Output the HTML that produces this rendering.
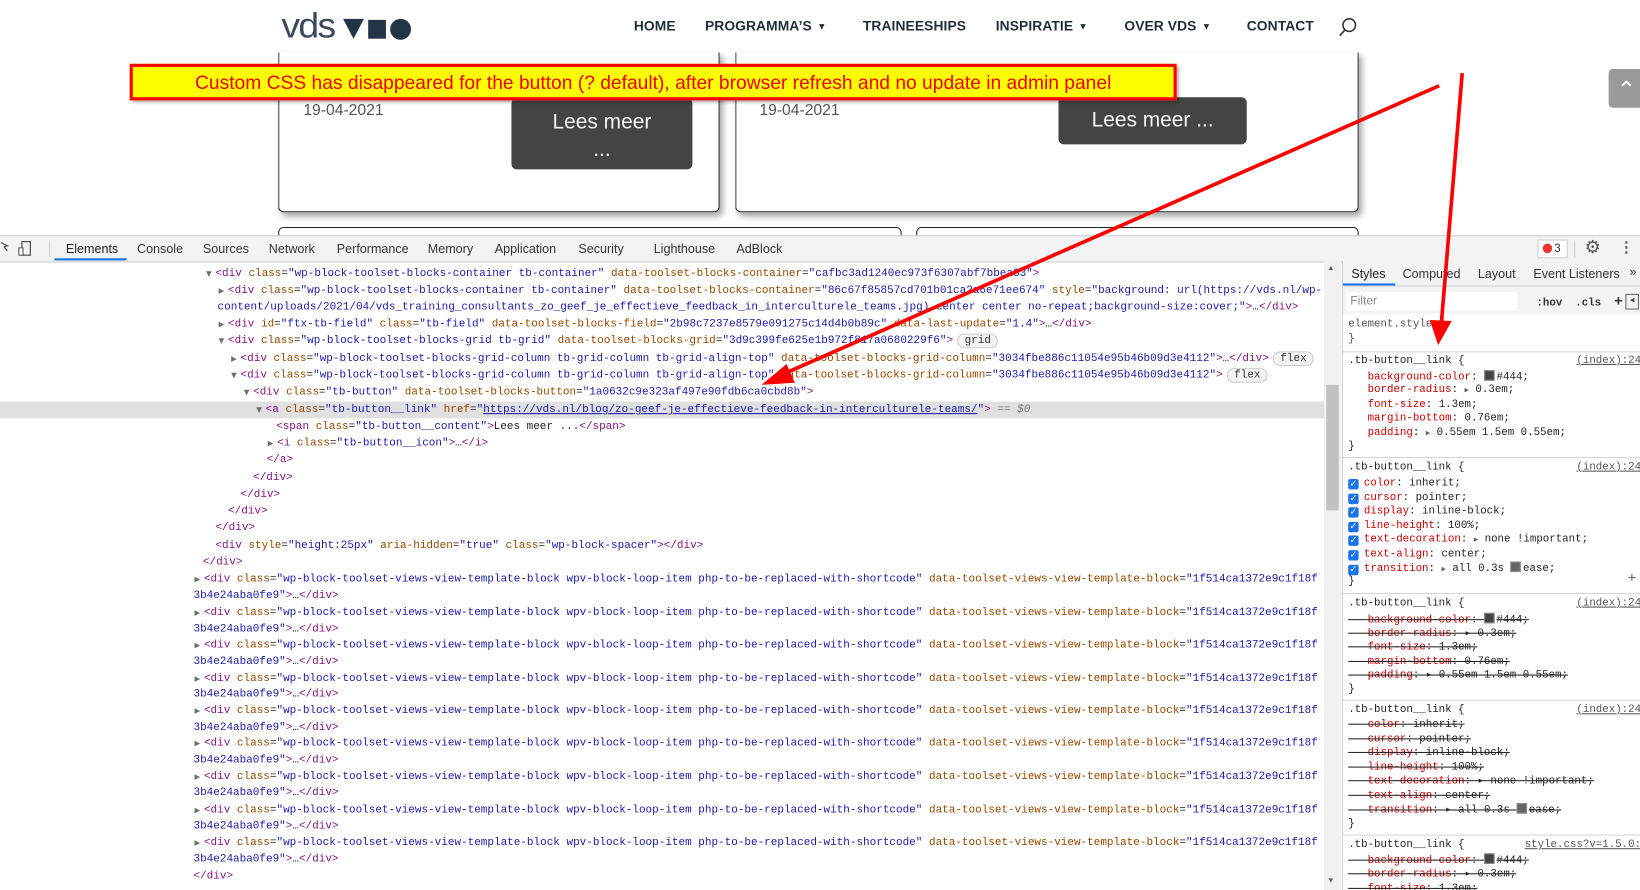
<!DOCTYPE html>
<html><head><meta charset="utf-8"><style>
html,body{margin:0;padding:0;width:1640px;height:890px;overflow:hidden;background:#fff}
#w{position:absolute;left:0;top:0;width:1568px;height:851px;transform:scale(1.04592,1.0458);transform-origin:0 0;font-family:"Liberation Sans",sans-serif;overflow:hidden}
.abs{position:absolute}
.nav{position:absolute;top:17px;font-size:13.2px;font-weight:bold;color:#1f2d3d;white-space:nowrap;letter-spacing:0.1px}
.nav small{font-size:9px;margin-left:5px;vertical-align:1px}
.card{position:absolute;background:#fff;border:1px solid #222;border-radius:0 0 5px 5px;box-shadow:3px 4px 6px rgba(0,0,0,.35)}
.btn{position:absolute;background:#444;color:#f4f4f4;border-radius:5px;text-align:center;font-size:20px}
.date{position:absolute;font-size:15px;color:#555}
.tabs{position:absolute;left:0;top:225px;width:1568px;height:24px;background:#f1f3f4;border-top:1px solid #cbcdd1;border-bottom:1px solid #cbcdd1}
.tab{position:absolute;top:5px;font-size:12px;color:#333}
#el{position:absolute;left:0;top:250px;width:1266px;height:601px;overflow:hidden;font-family:"Liberation Mono",monospace;font-size:10.5px;color:#222}
.r{position:absolute;white-space:pre;line-height:16px;height:16px}
.tr{position:absolute;left:-9px;top:0;font-size:7px;color:#6e6e6e;font-family:"DejaVu Sans",sans-serif}
.g{color:#881280}.n{color:#994500}.v{color:#1a1aa6}.k{color:#222}
.u{color:#1a1aa6;text-decoration:underline}
.badge{display:inline-block;border:1px solid #ccc;border-radius:8px;background:#f3f3f3;padding:0 6px;line-height:12px;margin-left:4px;color:#333}
#st{position:absolute;left:1283px;top:250px;width:285px;height:601px;border-left:1px solid #cbcdd1;overflow:hidden;font-family:"Liberation Mono",monospace;font-size:10.3px;color:#222}
.s{position:absolute;white-space:pre;line-height:13px;left:5px}
.p{color:#c80000}
.del{text-decoration:line-through}
.hr{position:absolute;left:0;width:285px;height:1px;background:#d6d6d6}
.src{position:absolute;right:0;white-space:pre;color:#555;text-decoration:underline;line-height:13px}
.cb{display:inline-block;width:10px;height:10px;background:#1a73e8;border-radius:2px;color:#fff;font-size:9px;line-height:10px;text-align:center;vertical-align:-1px;margin-right:5px;font-family:"DejaVu Sans",sans-serif}
.sw{display:inline-block;width:8px;height:8px;background:#444;border:1px solid #888;vertical-align:-1px;margin-right:2px}
</style></head><body><div id="w">

<!-- header -->
<div class="abs" style="left:269px;top:6px;font-size:34px;color:#3a4a5a;letter-spacing:-1.5px;transform:scaleX(1.05);transform-origin:0 0">vds</div>
<svg class="abs" style="left:328px;top:16px" width="68" height="24"><polygon points="0,2 20,2 10,21" fill="#243447"/><rect x="24" y="3" width="17" height="18" fill="#243447"/><circle cx="55" cy="12" r="10" fill="#243447"/></svg>
<div class="nav" style="left:606px">HOME</div>
<div class="nav" style="left:674px">PROGRAMMA’S<small>▼</small></div>
<div class="nav" style="left:825px">TRAINEESHIPS</div>
<div class="nav" style="left:952px">INSPIRATIE<small>▼</small></div>
<div class="nav" style="left:1075px">OVER VDS<small>▼</small></div>
<div class="nav" style="left:1192px">CONTACT</div>
<svg class="abs" style="left:1279px;top:16px" width="20" height="20"><circle cx="11" cy="8" r="6" fill="none" stroke="#333" stroke-width="1.5"/><line x1="7" y1="12.5" x2="2" y2="18" stroke="#333" stroke-width="1.6"/></svg>

<!-- cards -->
<div class="card" style="left:266px;top:50px;width:420px;height:152px;border-top:none"></div>
<div class="card" style="left:703px;top:50px;width:594px;height:152px;border-top:none"></div>
<div class="card" style="left:266px;top:217px;width:594px;height:30px;border-radius:5px 5px 0 0;box-shadow:none"></div>
<div class="card" style="left:876px;top:217px;width:421px;height:30px;border-radius:5px 5px 0 0;box-shadow:none"></div>
<div class="date" style="left:290px;top:97px">19-04-2021</div>
<div class="date" style="left:726px;top:97px">19-04-2021</div>
<div class="btn" style="left:489px;top:94px;width:173px;height:68px;line-height:26px;padding-top:10px;box-sizing:border-box">Lees meer<br>...</div>
<div class="btn" style="left:1012px;top:93px;width:180px;height:45px;line-height:45px">Lees meer ...</div>
<div class="abs" style="left:1538px;top:66px;width:34px;height:37px;background:#9a9a9a;border-radius:4px 0 0 4px;color:#fff;font-size:22px;text-align:center;line-height:40px">&#8963;</div>

<!-- banner -->
<div class="abs" style="left:124px;top:61px;width:995px;height:29px;background:#ffff00;border:3px solid #ff0000;box-shadow:2px 2px 3px rgba(0,0,0,.35);color:#ee0000;font-size:18.4px;text-align:center;line-height:29px">Custom CSS has disappeared for the button (? default), after browser refresh and no update in admin panel</div>

<!-- devtools tabs -->
<div class="tabs">
<svg class="abs" style="left:0;top:4px" width="40" height="16"><path d="M1 2 L7 5 L4 6 L7 10" fill="none" stroke="#555" stroke-width="1.2"/><rect x="21" y="1" width="8" height="13" fill="none" stroke="#555" stroke-width="1.2"/><rect x="18" y="7" width="4" height="7" fill="#fff" stroke="#555" stroke-width="1"/></svg>
<div class="abs" style="left:47px;top:4px;width:1px;height:16px;background:#ccc"></div>
<div class="tab" style="left:63px;color:#222">Elements</div>
<div class="abs" style="left:52px;top:21px;width:69px;height:2px;background:#1a73e8"></div>
<div class="tab" style="left:131px">Console</div>
<div class="tab" style="left:194px">Sources</div>
<div class="tab" style="left:257px">Network</div>
<div class="tab" style="left:322px">Performance</div>
<div class="tab" style="left:409px">Memory</div>
<div class="tab" style="left:473px">Application</div>
<div class="tab" style="left:553px">Security</div>
<div class="tab" style="left:625px">Lighthouse</div>
<div class="tab" style="left:704px">AdBlock</div>
<div class="abs" style="left:1470px;top:3px;width:27px;height:16px;border:1px solid #ccc;background:#fff;font-size:11px;line-height:16px;color:#333"><span style="display:inline-block;width:9px;height:9px;border-radius:50%;background:#e33;margin:0 2px 0 4px;vertical-align:-1px"></span>3</div>
<div class="abs" style="left:1505px;top:4px;width:1px;height:16px;background:#ccc"></div>
<div class="abs" style="left:1515px;top:1px;font-size:17px;color:#555">⚙</div>
<div class="abs" style="left:1548px;top:2px;font-size:14px;color:#555;font-weight:bold">⋮</div>
</div>

<!-- elements -->
<div id="el">
<div class="abs" style="left:0;top:134px;width:1266px;height:16px;background:#e0e0e0"></div>
<div class="r" style="left:206px;top:-12px"><span class="g">&lt;/div&gt;</span></div>
<div class="r" style="left:206px;top:4px"><span class="tr">▼</span><span class="g">&lt;div</span> <span class="n">class</span>=<span class="v">"wp-block-toolset-blocks-container tb-container"</span> <span class="n">data-toolset-blocks-container</span>=<span class="v">"cafbc3ad1240ec973f6307abf7bbea33"</span><span class="g">&gt;</span></div>
<div class="r" style="left:218px;top:20px"><span class="tr">▶</span><span class="g">&lt;div</span> <span class="n">class</span>=<span class="v">"wp-block-toolset-blocks-container tb-container"</span> <span class="n">data-toolset-blocks-container</span>=<span class="v">"86c67f85857cd701b01ca2a6e71ee674"</span> <span class="n">style</span>=<span class="v">"background: url(https://vds.nl/wp-</span></div>
<div class="r" style="left:208px;top:36px"><span class="v">content/uploads/2021/04/vds_training_consultants_zo_geef_je_effectieve_feedback_in_interculturele_teams.jpg) center center no-repeat;background-size:cover;"</span><span class="g">&gt;</span>…<span class="g">&lt;/div&gt;</span></div>
<div class="r" style="left:218px;top:52px"><span class="tr">▶</span><span class="g">&lt;div</span> <span class="n">id</span>=<span class="v">"ftx-tb-field"</span> <span class="n">class</span>=<span class="v">"tb-field"</span> <span class="n">data-toolset-blocks-field</span>=<span class="v">"2b98c7237e8579e091275c14d4b0b89c"</span> <span class="n">data-last-update</span>=<span class="v">"1.4"</span><span class="g">&gt;</span>…<span class="g">&lt;/div&gt;</span></div>
<div class="r" style="left:218px;top:68px"><span class="tr">▼</span><span class="g">&lt;div</span> <span class="n">class</span>=<span class="v">"wp-block-toolset-blocks-grid tb-grid"</span> <span class="n">data-toolset-blocks-grid</span>=<span class="v">"3d9c399fe625e1b972f817a0680229f6"</span><span class="g">&gt;</span><span class="badge">grid</span></div>
<div class="r" style="left:230px;top:85px"><span class="tr">▶</span><span class="g">&lt;div</span> <span class="n">class</span>=<span class="v">"wp-block-toolset-blocks-grid-column tb-grid-column tb-grid-align-top"</span> <span class="n">data-toolset-blocks-grid-column</span>=<span class="v">"3034fbe886c11054e95b46b09d3e4112"</span><span class="g">&gt;</span>…<span class="g">&lt;/div&gt;</span><span class="badge">flex</span></div>
<div class="r" style="left:230px;top:101px"><span class="tr">▼</span><span class="g">&lt;div</span> <span class="n">class</span>=<span class="v">"wp-block-toolset-blocks-grid-column tb-grid-column tb-grid-align-top"</span> <span class="n">data-toolset-blocks-grid-column</span>=<span class="v">"3034fbe886c11054e95b46b09d3e4112"</span><span class="g">&gt;</span><span class="badge">flex</span></div>
<div class="r" style="left:242px;top:117px"><span class="tr">▼</span><span class="g">&lt;div</span> <span class="n">class</span>=<span class="v">"tb-button"</span> <span class="n">data-toolset-blocks-button</span>=<span class="v">"1a0632c9e323af497e90fdb6ca0cbd8b"</span><span class="g">&gt;</span></div>
<div class="r" style="left:254px;top:134px"><span class="tr">▼</span><span class="g">&lt;a</span> <span class="n">class</span>=<span class="v">"tb-button__link"</span> <span class="n">href</span>=<span class="v">"</span><span class="u">https://vds.nl/blog/zo-geef-je-effectieve-feedback-in-interculturele-teams/</span><span class="v">"</span><span class="g">&gt;</span> <span style="color:#777">== <i>$0</i></span></div>
<div class="r" style="left:264px;top:150px"><span class="g">&lt;span</span> <span class="n">class</span>=<span class="v">"tb-button__content"</span><span class="g">&gt;</span>Lees meer ...<span class="g">&lt;/span&gt;</span></div>
<div class="r" style="left:265px;top:166px"><span class="tr">▶</span><span class="g">&lt;i</span> <span class="n">class</span>=<span class="v">"tb-button__icon"</span><span class="g">&gt;</span>…<span class="g">&lt;/i&gt;</span></div>
<div class="r" style="left:255px;top:182px"><span class="g">&lt;/a&gt;</span></div>
<div class="r" style="left:242px;top:199px"><span class="g">&lt;/div&gt;</span></div>
<div class="r" style="left:230px;top:215px"><span class="g">&lt;/div&gt;</span></div>
<div class="r" style="left:218px;top:231px"><span class="g">&lt;/div&gt;</span></div>
<div class="r" style="left:206px;top:247px"><span class="g">&lt;/div&gt;</span></div>
<div class="r" style="left:206px;top:264px"><span class="g">&lt;div</span> <span class="n">style</span>=<span class="v">"height:25px"</span> <span class="n">aria-hidden</span>=<span class="v">"true"</span> <span class="n">class</span>=<span class="v">"wp-block-spacer"</span><span class="g">&gt;&lt;/div&gt;</span></div>
<div class="r" style="left:194px;top:280px"><span class="g">&lt;/div&gt;</span></div>

<div class="r" style="left:195px;top:296px"><span class="tr">▶</span><span class="g">&lt;div</span> <span class="n">class</span>=<span class="v">"wp-block-toolset-views-view-template-block wpv-block-loop-item php-to-be-replaced-with-shortcode"</span> <span class="n">data-toolset-views-view-template-block</span>=<span class="v">"1f514ca1372e9c1f18f</span></div>
<div class="r" style="left:185px;top:312px"><span class="v">3b4e24aba0fe9"</span><span class="g">&gt;</span>…<span class="g">&lt;/div&gt;</span></div>
<div class="r" style="left:195px;top:328px"><span class="tr">▶</span><span class="g">&lt;div</span> <span class="n">class</span>=<span class="v">"wp-block-toolset-views-view-template-block wpv-block-loop-item php-to-be-replaced-with-shortcode"</span> <span class="n">data-toolset-views-view-template-block</span>=<span class="v">"1f514ca1372e9c1f18f</span></div>
<div class="r" style="left:185px;top:344px"><span class="v">3b4e24aba0fe9"</span><span class="g">&gt;</span>…<span class="g">&lt;/div&gt;</span></div>
<div class="r" style="left:195px;top:359px"><span class="tr">▶</span><span class="g">&lt;div</span> <span class="n">class</span>=<span class="v">"wp-block-toolset-views-view-template-block wpv-block-loop-item php-to-be-replaced-with-shortcode"</span> <span class="n">data-toolset-views-view-template-block</span>=<span class="v">"1f514ca1372e9c1f18f</span></div>
<div class="r" style="left:185px;top:375px"><span class="v">3b4e24aba0fe9"</span><span class="g">&gt;</span>…<span class="g">&lt;/div&gt;</span></div>
<div class="r" style="left:195px;top:391px"><span class="tr">▶</span><span class="g">&lt;div</span> <span class="n">class</span>=<span class="v">"wp-block-toolset-views-view-template-block wpv-block-loop-item php-to-be-replaced-with-shortcode"</span> <span class="n">data-toolset-views-view-template-block</span>=<span class="v">"1f514ca1372e9c1f18f</span></div>
<div class="r" style="left:185px;top:406px"><span class="v">3b4e24aba0fe9"</span><span class="g">&gt;</span>…<span class="g">&lt;/div&gt;</span></div>
<div class="r" style="left:195px;top:422px"><span class="tr">▶</span><span class="g">&lt;div</span> <span class="n">class</span>=<span class="v">"wp-block-toolset-views-view-template-block wpv-block-loop-item php-to-be-replaced-with-shortcode"</span> <span class="n">data-toolset-views-view-template-block</span>=<span class="v">"1f514ca1372e9c1f18f</span></div>
<div class="r" style="left:185px;top:438px"><span class="v">3b4e24aba0fe9"</span><span class="g">&gt;</span>…<span class="g">&lt;/div&gt;</span></div>
<div class="r" style="left:195px;top:453px"><span class="tr">▶</span><span class="g">&lt;div</span> <span class="n">class</span>=<span class="v">"wp-block-toolset-views-view-template-block wpv-block-loop-item php-to-be-replaced-with-shortcode"</span> <span class="n">data-toolset-views-view-template-block</span>=<span class="v">"1f514ca1372e9c1f18f</span></div>
<div class="r" style="left:185px;top:469px"><span class="v">3b4e24aba0fe9"</span><span class="g">&gt;</span>…<span class="g">&lt;/div&gt;</span></div>
<div class="r" style="left:195px;top:485px"><span class="tr">▶</span><span class="g">&lt;div</span> <span class="n">class</span>=<span class="v">"wp-block-toolset-views-view-template-block wpv-block-loop-item php-to-be-replaced-with-shortcode"</span> <span class="n">data-toolset-views-view-template-block</span>=<span class="v">"1f514ca1372e9c1f18f</span></div>
<div class="r" style="left:185px;top:500px"><span class="v">3b4e24aba0fe9"</span><span class="g">&gt;</span>…<span class="g">&lt;/div&gt;</span></div>
<div class="r" style="left:195px;top:517px"><span class="tr">▶</span><span class="g">&lt;div</span> <span class="n">class</span>=<span class="v">"wp-block-toolset-views-view-template-block wpv-block-loop-item php-to-be-replaced-with-shortcode"</span> <span class="n">data-toolset-views-view-template-block</span>=<span class="v">"1f514ca1372e9c1f18f</span></div>
<div class="r" style="left:185px;top:532px"><span class="v">3b4e24aba0fe9"</span><span class="g">&gt;</span>…<span class="g">&lt;/div&gt;</span></div>
<div class="r" style="left:195px;top:548px"><span class="tr">▶</span><span class="g">&lt;div</span> <span class="n">class</span>=<span class="v">"wp-block-toolset-views-view-template-block wpv-block-loop-item php-to-be-replaced-with-shortcode"</span> <span class="n">data-toolset-views-view-template-block</span>=<span class="v">"1f514ca1372e9c1f18f</span></div>
<div class="r" style="left:185px;top:564px"><span class="v">3b4e24aba0fe9"</span><span class="g">&gt;</span>…<span class="g">&lt;/div&gt;</span></div>
<div class="r" style="left:185px;top:580px"><span class="g">&lt;/div&gt;</span></div>
</div>
<!-- scrollbar -->
<div class="abs" style="left:1266px;top:250px;width:16px;height:601px;background:#f1f1f1"></div>
<div class="abs" style="left:1268px;top:368px;width:12px;height:120px;background:#c1c1c1"></div>
<div class="abs" style="left:1269px;top:253px;font-size:7px;color:#555">▲</div>
<div class="abs" style="left:1269px;top:839px;font-size:7px;color:#555">▼</div>

<!-- styles pane -->
<div id="st">
<div class="abs" style="left:0;top:0;width:285px;height:23px;background:#f1f3f4;border-bottom:1px solid #cbcdd1;font-family:'Liberation Sans',sans-serif;font-size:12px;color:#333">
<span class="abs" style="left:8px;top:5px;color:#222">Styles</span>
<div class="abs" style="left:0;top:21px;width:50px;height:2px;background:#1a73e8"></div>
<span class="abs" style="left:57px;top:5px">Computed</span>
<span class="abs" style="left:129px;top:5px">Layout</span>
<span class="abs" style="left:182px;top:5px">Event Listeners</span>
<span class="abs" style="left:274px;top:3px">»</span>
</div>
<div class="abs" style="left:0;top:24px;width:285px;height:26px;background:#f1f3f4"></div>
<div class="abs" style="left:3px;top:29px;width:160px;height:18px;background:#fff;font-family:'Liberation Sans',sans-serif;font-size:11.5px;color:#888;line-height:18px;padding-left:4px">Filter</div>
<div class="abs" style="left:185px;top:31px;font-weight:bold;color:#333;white-space:pre">:hov  .cls  <span style="font-size:14px">+</span></div>
<div class="abs" style="left:270px;top:31px;width:11px;height:13px;border:1px solid #666;font-size:7px;line-height:13px;color:#444;text-align:center">◀</div>
<div class="s" style="top:54px;color:#555">element.style {</div>
<div class="s" style="top:68px;color:#555">}</div>
<div class="hr" style="top:86px"></div>
<div class="s" style="top:89px">.tb-button__link {</div><div class="src" style="top:89px">(index):24</div>
<div class="s" style="top:104px">   <span class="p">background-color</span>: <span class="sw"></span>#444;</div>
<div class="s" style="top:117px">   <span class="p">border-radius</span>: <span style="font-size:7px;color:#666">▶</span> 0.3em;</div>
<div class="s" style="top:131px">   <span class="p">font-size</span>: 1.3em;</div>
<div class="s" style="top:144px">   <span class="p">margin-bottom</span>: 0.76em;</div>
<div class="s" style="top:158px">   <span class="p">padding</span>: <span style="font-size:7px;color:#666">▶</span> 0.55em 1.5em 0.55em;</div>
<div class="s" style="top:171px">}</div>
<div class="hr" style="top:187px"></div>
<div class="s" style="top:191px">.tb-button__link {</div><div class="src" style="top:191px">(index):24</div>
<div class="s" style="top:206px"><span class="cb">✓</span><span class="p">color</span>: inherit;</div>
<div class="s" style="top:220px"><span class="cb">✓</span><span class="p">cursor</span>: pointer;</div>
<div class="s" style="top:233px"><span class="cb">✓</span><span class="p">display</span>: inline-block;</div>
<div class="s" style="top:247px"><span class="cb">✓</span><span class="p">line-height</span>: 100%;</div>
<div class="s" style="top:260px"><span class="cb">✓</span><span class="p">text-decoration</span>: <span style="font-size:7px;color:#666">▶</span> none !important;</div>
<div class="s" style="top:274px"><span class="cb">✓</span><span class="p">text-align</span>: center;</div>
<div class="s" style="top:287px"><span class="cb">✓</span><span class="p">transition</span>: <span style="font-size:7px;color:#666">▶</span> all 0.3s <span class="sw" style="background:#666"></span>ease;</div>
<div class="s" style="top:300px">}</div><div class="abs" style="left:272px;top:296px;font-size:14px;color:#666">+</div>
<div class="hr" style="top:317px"></div>
<div class="s" style="top:321px">.tb-button__link {</div><div class="src" style="top:321px">(index):24</div>
<div class="s del" style="top:336px">   <span class="p">background-color</span>: <span class="sw"></span>#444;</div>
<div class="s del" style="top:350px">   <span class="p">border-radius</span>: ▸ 0.3em;</div>
<div class="s del" style="top:363px">   <span class="p">font-size</span>: 1.3em;</div>
<div class="s del" style="top:377px">   <span class="p">margin-bottom</span>: 0.76em;</div>
<div class="s del" style="top:390px">   <span class="p">padding</span>: ▸ 0.55em 1.5em 0.55em;</div>
<div class="s" style="top:403px">}</div>
<div class="hr" style="top:419px"></div>
<div class="s" style="top:423px">.tb-button__link {</div><div class="src" style="top:423px">(index):24</div>
<div class="s del" style="top:437px">   <span class="p">color</span>: inherit;</div>
<div class="s del" style="top:451px">   <span class="p">cursor</span>: pointer;</div>
<div class="s del" style="top:464px">   <span class="p">display</span>: inline-block;</div>
<div class="s del" style="top:478px">   <span class="p">line-height</span>: 100%;</div>
<div class="s del" style="top:491px">   <span class="p">text-decoration</span>: ▸ none !important;</div>
<div class="s del" style="top:505px">   <span class="p">text-align</span>: center;</div>
<div class="s del" style="top:518px">   <span class="p">transition</span>: ▸ all 0.3s <span class="sw" style="background:#666"></span>ease;</div>
<div class="s" style="top:532px">}</div>
<div class="hr" style="top:548px"></div>
<div class="s" style="top:552px">.tb-button__link {</div><div class="src" style="top:552px">style.css?v=1.5.0:</div>
<div class="s del" style="top:566px">   <span class="p">background-color</span>: <span class="sw"></span>#444;</div>
<div class="s del" style="top:580px">   <span class="p">border-radius</span>: ▸ 0.3em;</div>
<div class="s del" style="top:594px">   <span class="p">font-size</span>: 1.3em;</div>
</div>

<!-- arrows -->
<svg class="abs" style="left:0;top:0" width="1568" height="851">
<line x1="1376" y1="82" x2="748" y2="358" stroke="#ff0000" stroke-width="3.5"/>
<polygon points="728,368 752,348 760,366" fill="#ff0000"/>
<line x1="1398" y1="70" x2="1378" y2="310" stroke="#ff0000" stroke-width="3.5"/>
<polygon points="1375,330 1367,306 1388,307" fill="#ff0000"/>
</svg>
</div></body></html>
